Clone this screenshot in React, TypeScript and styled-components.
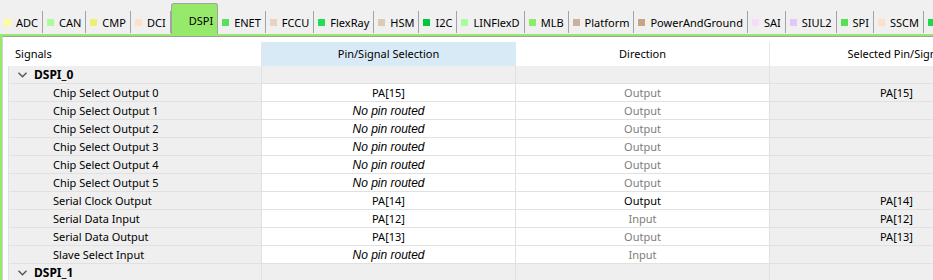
import React from "react";
import styled, { createGlobalStyle } from "styled-components";

const GlobalStyle = createGlobalStyle`
  html, body {
    margin: 0;
    padding: 0;
    background: #f0f0f0;
    font-family: "Noto Sans", "Liberation Sans", sans-serif;
    font-size: 11px;
    color: #000;
    overflow: hidden;
  }
`;

const Page = styled.div`
  width: 933px;
  height: 280px;
  overflow: hidden;
  display: flex;
  flex-direction: column;
`;

const TabBar = styled.div`
  display: flex;
  align-items: flex-end;
  height: 34px;
  flex-shrink: 0;
  white-space: nowrap;
`;

const Tab = styled.div<{ $active?: boolean }>`
  display: flex;
  align-items: center;
  gap: 5px;
  flex-shrink: 0;
  box-sizing: border-box;
  height: ${(p) => (p.$active ? "31px" : "22px")};
  margin-bottom: ${(p) => (p.$active ? "0" : "1px")};
  padding: ${(p) => (p.$active ? "3px 4px 0 5px" : "0 4px")};
  background: ${(p) => (p.$active ? "#97e96b" : "transparent")};
  border-right: 1px solid #a3a3a3;
  border-left: ${(p) => (p.$active ? "1px solid #a3a3a3" : "none")};
  border-top: ${(p) => (p.$active ? "1px solid #a3a3a3" : "none")};
  border-radius: ${(p) => (p.$active ? "3px 3px 0 0" : "0")};
`;

const Swatch = styled.span<{ $color: string }>`
  width: 7px;
  height: 7px;
  background: ${(p) => p.$color};
  flex-shrink: 0;
`;

const Panel = styled.div`
  flex: 1;
  border-top: 2px solid #97e96b;
  border-left: 2px solid #97e96b;
  display: flex;
  flex-direction: column;
`;

const PanelInner = styled.div`
  flex: 1;
  background: #fff;
  border-top: 1px solid #a0a0a0;
  border-left: 1px solid #d4d4d4;
  padding: 5px 0 0 5px;
  overflow: hidden;
`;

const Table = styled.div`
  display: grid;
  grid-template-columns: 254px 254px 254px 254px;
  width: 1016px;
`;

const HeadCell = styled.div<{ $left?: boolean; $hl?: boolean }>`
  height: 24px;
  display: flex;
  align-items: center;
  justify-content: ${(p) => (p.$left ? "flex-start" : "center")};
  padding-left: ${(p) => (p.$left ? "7px" : "0")};
  padding-bottom: 2px;
  background: ${(p) => (p.$hl ? "#d9eaf7" : "#fff")};
  border-right: 1px solid ${(p) => (p.$hl ? "#d9eaf7" : "#e6e6e6")};
  box-sizing: border-box;
`;

const Cell = styled.div<{ $bg: string; $left?: boolean; $indent?: number }>`
  height: 18px;
  box-sizing: border-box;
  display: flex;
  align-items: center;
  justify-content: ${(p) => (p.$left ? "flex-start" : "center")};
  padding-left: ${(p) => p.$indent ?? 0}px;
  background: ${(p) => p.$bg};
  border-bottom: 1px solid #e1e1e1;
  border-right: 1px solid #e1e1e1;
  border-left: ${(p) => (p.$left ? "1px solid #e1e1e1" : "none")};
  white-space: nowrap;
`;

const GroupLabel = styled.span`
  font-weight: bold;
  font-size: 12px;
  display: flex;
  align-items: center;
  gap: 7px;
`;

const Value = styled.span<{ $muted?: boolean }>`
  color: ${(p) => (p.$muted ? "#7d7d7d" : "#000")};
`;

const NoPin = styled.span`
  font-family: "Liberation Sans", sans-serif;
  font-style: italic;
  font-size: 12px;
`;

const Chevron = () => (
  <svg width="9" height="6" viewBox="0 0 9 6">
    <path d="M0.5 0.8 L4.5 4.8 L8.5 0.8" fill="none" stroke="#555" strokeWidth="1.4" />
  </svg>
);

const tabs: { name: string; color: string; active?: boolean }[] = [
  { name: "ADC", color: "#fdfd9a" },
  { name: "CAN", color: "#acfd99" },
  { name: "CMP", color: "#eeee73" },
  { name: "DCI", color: "#fde0c9" },
  { name: "DSPI", color: "#97e96b", active: true },
  { name: "ENET", color: "#5be05b" },
  { name: "FCCU", color: "#e8d2c1" },
  { name: "FlexRay", color: "#27dc55" },
  { name: "HSM", color: "#dcc9b6" },
  { name: "I2C", color: "#00c83c" },
  { name: "LINFlexD", color: "#a9fd99" },
  { name: "MLB", color: "#8ded64" },
  { name: "Platform", color: "#c9b19b" },
  { name: "PowerAndGround", color: "#c5a583" },
  { name: "SAI", color: "#f6dcf9" },
  { name: "SIUL2", color: "#e0c8f8" },
  { name: "SPI", color: "#57e057" },
  { name: "SSCM", color: "#fde0c9" },
  { name: "", color: "#20d850" },
];

type Row = { signal: string; pin: string; dir: string; dirActive?: boolean; sel?: string };

const rows: Row[] = [
  { signal: "Chip Select Output 0", pin: "PA[15]", dir: "Output", sel: "PA[15]" },
  { signal: "Chip Select Output 1", pin: "", dir: "Output" },
  { signal: "Chip Select Output 2", pin: "", dir: "Output" },
  { signal: "Chip Select Output 3", pin: "", dir: "Output" },
  { signal: "Chip Select Output 4", pin: "", dir: "Output" },
  { signal: "Chip Select Output 5", pin: "", dir: "Output" },
  { signal: "Serial Clock Output", pin: "PA[14]", dir: "Output", dirActive: true, sel: "PA[14]" },
  { signal: "Serial Data Input", pin: "PA[12]", dir: "Input", sel: "PA[12]" },
  { signal: "Serial Data Output", pin: "PA[13]", dir: "Output", sel: "PA[13]" },
  { signal: "Slave Select Input", pin: "", dir: "Input" },
];

const GroupRow = ({ name }: { name: string }) => (
  <>
    <Cell $bg="#efefef" $left $indent={9}>
      <GroupLabel>
        <Chevron />
        {name}
      </GroupLabel>
    </Cell>
    <Cell $bg="#efefef" />
    <Cell $bg="#efefef" />
    <Cell $bg="#efefef" />
  </>
);

export default function App() {
  return (
    <Page>
      <GlobalStyle />
      <TabBar>
        {tabs.map((t, i) => (
          <Tab key={i} $active={t.active}>
            <Swatch $color={t.color} />
            {t.name && <span>{t.name}</span>}
          </Tab>
        ))}
      </TabBar>
      <Panel>
        <PanelInner>
          <Table>
            <HeadCell $left>Signals</HeadCell>
            <HeadCell $hl>Pin/Signal Selection</HeadCell>
            <HeadCell>Direction</HeadCell>
            <HeadCell>Selected Pin/Signal</HeadCell>

            <GroupRow name="DSPI_0" />
            {rows.map((r) => (
              <React.Fragment key={r.signal}>
                <Cell $bg="#efefef" $left $indent={44}>
                  {r.signal}
                </Cell>
                <Cell $bg="#fff">{r.pin ? <Value>{r.pin}</Value> : <NoPin>No pin routed</NoPin>}</Cell>
                <Cell $bg="#fff">
                  <Value $muted={!r.dirActive}>{r.dir}</Value>
                </Cell>
                <Cell $bg="#efefef">{r.sel && <Value>{r.sel}</Value>}</Cell>
              </React.Fragment>
            ))}
            <GroupRow name="DSPI_1" />
          </Table>
        </PanelInner>
      </Panel>
    </Page>
  );
}
